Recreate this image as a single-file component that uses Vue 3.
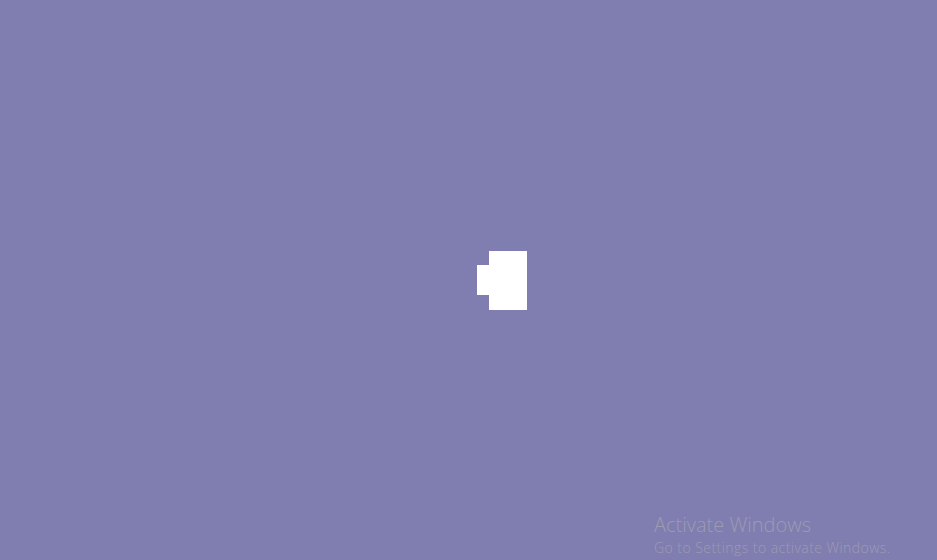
<template>
  <div class="page">
    <div class="shape">
      <div class="shape__tab"></div>
      <div class="shape__body"></div>
    </div>

    <div class="watermark">
      <div class="watermark__title">Activate Windows</div>
      <div class="watermark__sub">Go to Settings to activate Windows.</div>
    </div>
  </div>
</template>

<script setup>
</script>

<style>
html,
body {
  margin: 0;
  background: #807eb0;
  overflow: hidden;
}
</style>

<style scoped>
.page {
  position: relative;
  box-sizing: border-box;
  width: 937px;
  height: 560px;
  padding: 251px 0 0 477px;
  background: #807eb0;
  font-family: "Open Sans", "Liberation Sans", sans-serif;
}
.shape {
  display: flex;
  width: 50px;
  height: 59px;
}
.shape__tab {
  width: 12px;
  height: 30px;
  margin-top: 14px;
  background: #ffffff;
}
.shape__body {
  width: 38px;
  height: 59px;
  background: #ffffff;
}
.watermark {
  position: absolute;
  left: 654px;
  top: 512px;
  white-space: nowrap;
  color: #9c9bb1;
}
.watermark__title {
  font-size: 20px;
  font-weight: 300;
  line-height: 26px;
}
.watermark__sub {
  font-size: 14px;
  font-weight: 300;
  line-height: 19px;
  letter-spacing: 0.45px;
}
</style>
